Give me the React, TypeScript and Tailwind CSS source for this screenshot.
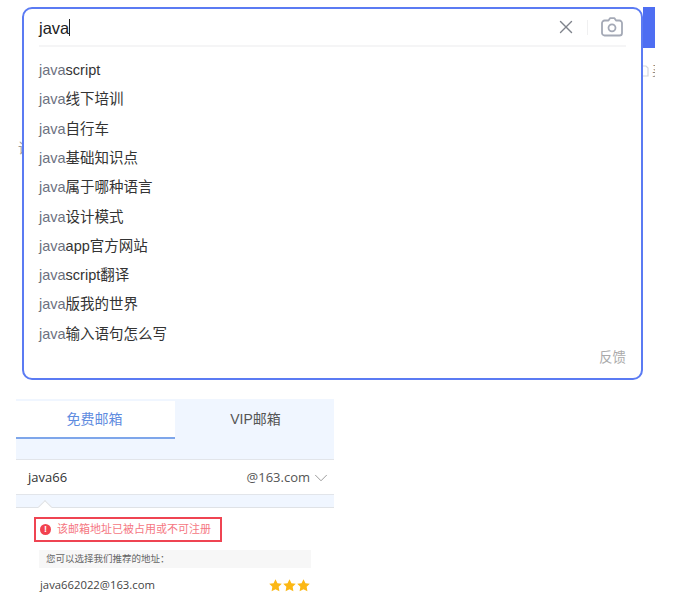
import { ChevronDown, X } from 'lucide-react';

const suggestions = [
  { head: 'java', rest: 'script' },
  { head: 'java', rest: '线下培训' },
  { head: 'java', rest: '自行车' },
  { head: 'java', rest: '基础知识点' },
  { head: 'java', rest: '属于哪种语言' },
  { head: 'java', rest: '设计模式' },
  { head: 'java', rest: 'app官方网站' },
  { head: 'java', rest: 'script翻译' },
  { head: 'java', rest: '版我的世界' },
  { head: 'java', rest: '输入语句怎么写' },
];

function CameraIcon() {
  return (
    <svg width="22" height="20" viewBox="0 0 22 20" fill="none" stroke="#a4a9b6" strokeWidth="1.8">
      <path d="M7.5 3.5 9 1.2h4.5l1.5 2.3h3.4A2.6 2.6 0 0 1 21 6.1v9.8a2.6 2.6 0 0 1-2.6 2.6H3.600A2.600 2.600 0 0 1 1 15.900V6.100a2.600 2.600 0 0 1 2.600-2.600z" strokeLinejoin="round" />
      <circle cx="11" cy="10.800" r="3.500" />
    </svg>
  );
}

function Star() {
  return (
    <svg width="13" height="13" viewBox="0 0 24 24" fill="#fcb814">
      <path d="M12 .5l3.600 7.300 8 1.100-5.800 5.600 1.400 8L12 18.700l-7.200 3.800 1.400-8L.4 8.900l8-1.100z" />
    </svg>
  );
}

export default function App() {
  return (
    <div className="relative w-[674px] h-[612px] overflow-hidden bg-white font-['Liberation_Sans','Noto_Sans_CJK_SC',sans-serif]">
      {/* text of the page behind the search box */}
      <span className="absolute left-[18px] top-[140px] text-[14px] leading-4 text-[#999]">请</span>
      <span className="absolute left-[643px] top-[63px] w-[12px] h-[16px] overflow-hidden flex items-center whitespace-nowrap text-[13px] leading-4 text-[#888]">
        <svg width="6" height="12" viewBox="0 0 6 12" fill="none" stroke="#d5d8de" strokeWidth="1.2" className="shrink-0">
          <path d="M0 1h3l2 2v8H0" />
        </svg>
        <span className="ml-[3px]">买</span>
      </span>

      <div className="relative flex pl-[22px] pt-[7px]">
        {/* Search box */}
        <div className="w-[621px] h-[373px] bg-white rounded-[10px] border-2 border-[#5b7bf3] px-[15px] flex flex-col">
          <div className="h-[38px] flex items-center border-b-2 border-[#f5f5f6] shrink-0">
            <span className="text-[16.500px] text-[#222] leading-6 pt-px">java</span>
            <span className="w-px h-[17px] bg-[#222]" />
            <div className="ml-auto mr-[3px] flex items-center">
              <X size={22} strokeWidth={1.5} className="text-[#7f838c]" />
              <span className="w-px h-[15px] bg-[#f0f0f1] ml-[10px] mr-[13px]" />
              <CameraIcon />
            </div>
          </div>
          <ul className="pt-[9.300px]">
            {suggestions.map((item, index) => (
              <li key={index} className="h-[29.300px] flex items-center text-[14.500px] text-[#333]">
                <span className="text-[#6d7180]">{item.head}</span>
                {item.rest}
              </li>
            ))}
          </ul>
          <div className="mt-auto pb-3 text-right text-[13.500px] leading-4 text-[#aaa]">反馈</div>
        </div>
        <div className="w-[12px] h-[41px] bg-[#4e6ef2]" />
      </div>

      {/* Mail register panel */}
      <div className="ml-4 mt-[19px] w-[318px]">
        <div className="flex h-[40px] bg-[#f0f6ff]">
          <div className="w-[159px] mt-[2px] pr-[2px] bg-white border-b-2 border-[#7ea6ea] text-[#5f8ce0] text-[14px] flex items-center justify-center">
            免费邮箱
          </div>
          <div className="flex-1 pt-px pl-[2px] text-[#555] text-[14px] flex items-center justify-center">VIP邮箱</div>
        </div>
        <div className="h-[20px] bg-[#f0f6ff]" />
        <div className="h-[36px] pt-px bg-white border-y border-[#e2e5ea] pl-3 pr-[2px] flex items-center justify-between text-[13px] text-[#333] font-['Open_Sans','Noto_Sans_CJK_SC',sans-serif]">
          <span>java66</span>
          <span className="flex items-center text-[#555]">
            @163.com
            <ChevronDown size={22} strokeWidth={0.8} className="text-[#777]" />
          </span>
        </div>
        <div className="relative h-[13px] bg-[#f0f6ff] border-b border-[#dfe2e6]">
          <span className="absolute left-[24px] top-[6.500px] w-[10px] h-[10px] rotate-45 bg-white border-l border-t border-[#dfe2e6]" />
        </div>
        <div className="pt-[9px] pl-[19px] pr-[23px]">
          <div className="w-[188px] h-[25px] -ml-[1px] border-2 border-[#ef4452] flex items-center pl-[4px] text-[11px] text-[#f57782]">
            <span className="w-[11px] h-[11px] mr-[6px] rounded-full bg-[#f2424f] text-white text-[9px] leading-[11px] font-bold text-center">!</span>
            该邮箱地址已被占用或不可注册
          </div>
          <div className="mt-[8px] ml-[4px] h-[18px] bg-[#f7f7f7] pl-[7px] flex items-center text-[9.500px] text-[#666]">
            您可以选择我们推荐的地址：
          </div>
          <div className="mt-[9px] ml-[5px] flex items-center justify-between text-[11.300px] text-[#444] font-['Open_Sans','Noto_Sans_CJK_SC',sans-serif]">
            <span>java662022@163.com</span>
            <span className="flex gap-[1px] mr-[1px]">
              <Star />
              <Star />
              <Star />
            </span>
          </div>
        </div>
      </div>
    </div>
  );
}
